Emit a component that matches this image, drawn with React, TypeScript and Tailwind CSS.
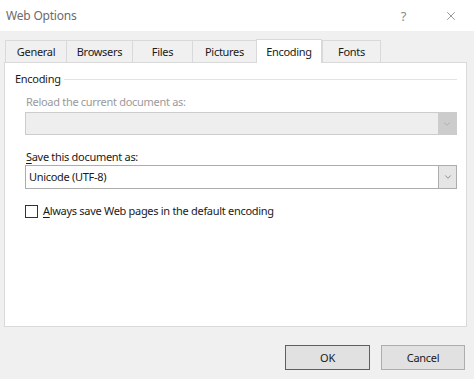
import { ChevronDown, X } from "lucide-react";

const tabs = [
  { label: "General", w: "w-[61px]" },
  { label: "Browsers", w: "w-[66px]" },
  { label: "Files", w: "w-[60px]" },
  { label: "Pictures", w: "w-[64px]" },
  { label: "Encoding", w: "w-[66px]" },
  { label: "Fonts", w: "w-[59px]" },
];

const App = () => {
  return (
    <div
      className="w-[474px] h-[379px] bg-[#f0f0f0] flex flex-col text-[11px] leading-[16px] tracking-[-0.3px] text-[#1a1a1a] overflow-hidden"
      style={{ fontFamily: '"Noto Sans", "Open Sans", sans-serif' }}
    >
      {/* title bar */}
      <div className="h-[31px] bg-white flex items-center pl-[6px] pr-[16px] shrink-0">
        <span className="text-[12px] tracking-[-0.2px] text-[#6b6b6b] flex-1">Web Options</span>
        <span className="text-[13px] text-[#8a8a8a] mr-[38px]">?</span>
        <X className="w-[14px] h-[14px] text-[#7a7a7a]" strokeWidth={1.3} />
      </div>

      {/* tabs */}
      <div className="flex pl-[5px] pt-[7px] h-[31px] items-end shrink-0">
        {tabs.map((t) =>
          t.label === "Encoding" ? (
            <div
              key={t.label}
              className={`${t.w} h-[24px] bg-white border border-b-0 border-[#d9d9d9] flex items-center justify-center -mb-px relative z-10`}
            >
              {t.label}
            </div>
          ) : (
            <div
              key={t.label}
              className={`${t.w} h-[22px] bg-[#f0f0f0] border border-b-0 border-r-0 border-[#d9d9d9] last:border-r flex items-center justify-center`}
            >
              {t.label}
            </div>
          )
        )}
      </div>

      {/* panel */}
      <div className="ml-[4px] w-[463px] h-[265px] bg-white border border-[#d9d9d9] shrink-0 pl-[20px] pr-[9px] pt-[8px]">
        <div className="flex items-center -ml-[10px] gap-[3px]">
          <span>Encoding</span>
          <div className="flex-1 h-px bg-[#e3e3e3] mt-[1px]" />
        </div>

        <div className="mt-[7px] ml-[1px] text-[#9a9a9a]">Reload the current document as:</div>
        <div className="mt-[2px] h-[23px] bg-[#eeeeee] border border-[#cccccc] flex">
          <div className="flex-1" />
          <div className="w-[18px] bg-[#cccccc] flex items-center justify-center">
            <ChevronDown className="w-[10px] h-[10px] text-[#a0a0a0]" strokeWidth={1.5} />
          </div>
        </div>

        <div className="mt-[14px] ml-[1px]">
          <span className="underline underline-offset-2">S</span>ave this document as:
        </div>
        <div className="h-[24px] bg-white border border-[#adadad] flex">
          <div className="flex-1 flex items-center pl-[3px]">Unicode (UTF-8)</div>
          <div className="w-[18px] bg-[#e5e5e5] border-l border-[#adadad] flex items-center justify-center">
            <ChevronDown className="w-[10px] h-[10px] text-[#555]" strokeWidth={1.5} />
          </div>
        </div>

        <label className="mt-[14px] flex items-center gap-[5px]">
          <span className="w-[13px] h-[13px] border border-[#333] bg-white" />
          <span>
            <span className="underline underline-offset-2">A</span>lways save Web pages in the default encoding
          </span>
        </label>
      </div>

      {/* buttons */}
      <div className="flex justify-end gap-[11px] pr-[9px] pt-[18px]">
        <button className="w-[85px] h-[25px] bg-[#e1e1e1] border border-[#0078d7]">OK</button>
        <button className="w-[84px] h-[25px] bg-[#e1e1e1] border border-[#adadad]">Cancel</button>
      </div>
    </div>
  );
};

export default App;
